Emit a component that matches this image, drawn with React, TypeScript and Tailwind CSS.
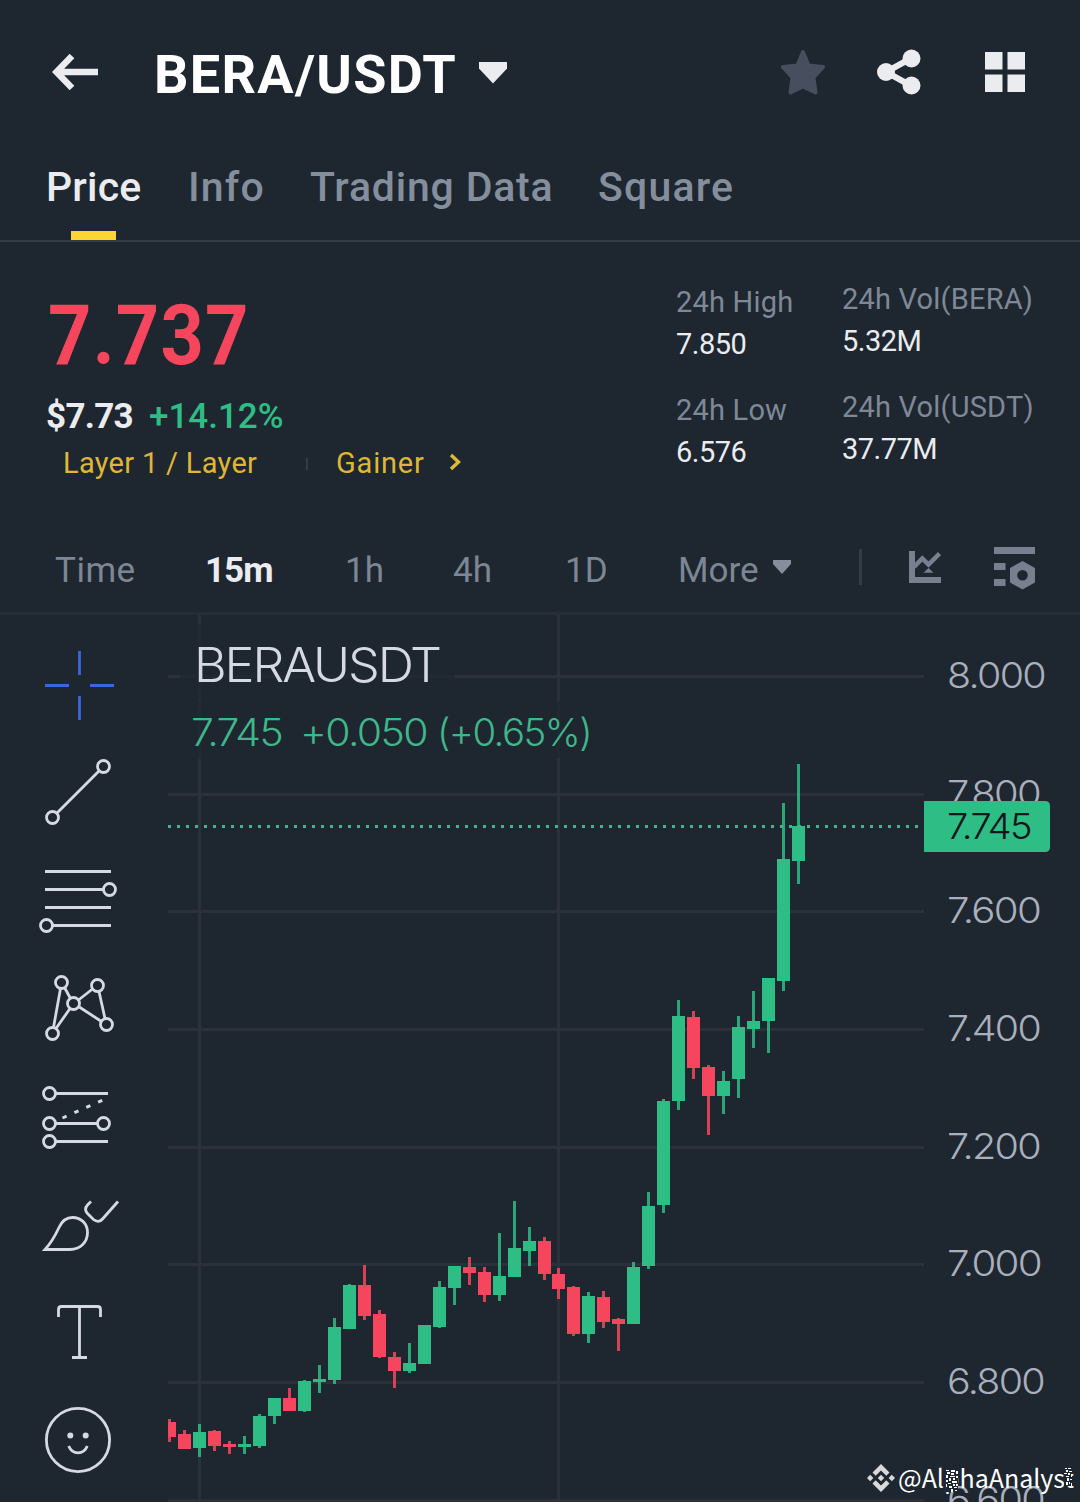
import type { ReactNode } from 'react'

type Candle = [x: number, high: number, top: number, bottom: number, low: number, up: 0 | 1]

const candles: Candle[] = [
  [169.5, 1419, 1422, 1437, 1442, 0],
  [184.5, 1430, 1434, 1449, 1449, 0],
  [199.5, 1424, 1432, 1448, 1457, 1],
  [214.5, 1430, 1431, 1446, 1451, 0],
  [229.5, 1441, 1444, 1447, 1454, 0],
  [244.5, 1436, 1444, 1447, 1454, 1],
  [259.5, 1414, 1416, 1446, 1448, 1],
  [274.5, 1398, 1398, 1416, 1424, 1],
  [289.5, 1388, 1398, 1411, 1411, 0],
  [304.5, 1380, 1381, 1411, 1412, 1],
  [319.5, 1365, 1379, 1382, 1393, 1],
  [334.5, 1318, 1327, 1380, 1384, 1],
  [349.5, 1284, 1285, 1329, 1329, 1],
  [364.5, 1265, 1285, 1316, 1320, 0],
  [379.5, 1310, 1314, 1357, 1358, 0],
  [394.5, 1352, 1357, 1371, 1388, 0],
  [409.5, 1343, 1363, 1371, 1373, 1],
  [424.5, 1325, 1325, 1364, 1364, 1],
  [439.5, 1281, 1287, 1327, 1328, 1],
  [454.5, 1266, 1266, 1288, 1305, 1],
  [469.5, 1257, 1267, 1273, 1285, 0],
  [484.5, 1267, 1272, 1295, 1302, 0],
  [499.5, 1233, 1276, 1295, 1301, 1],
  [514.5, 1201, 1248, 1277, 1277, 1],
  [529.5, 1227, 1241, 1251, 1266, 1],
  [544.5, 1237, 1241, 1274, 1280, 0],
  [558.5, 1268, 1274, 1289, 1299, 0],
  [573.5, 1286, 1287, 1334, 1336, 0],
  [588.5, 1292, 1296, 1334, 1343, 1],
  [603.5, 1291, 1297, 1322, 1328, 0],
  [618.5, 1318, 1319, 1324, 1351, 0],
  [633.5, 1262, 1267, 1324, 1324, 1],
  [648.5, 1192, 1206, 1266, 1269, 1],
  [663.5, 1099, 1101, 1205, 1213, 1],
  [678.5, 1000, 1016, 1101, 1110, 1],
  [693.5, 1011, 1017, 1068, 1079, 0],
  [708.5, 1065, 1067, 1096, 1135, 0],
  [723.5, 1071, 1081, 1096, 1114, 1],
  [738.5, 1016, 1027, 1079, 1098, 1],
  [753.5, 991, 1021, 1029, 1048, 1],
  [768.5, 978, 978, 1021, 1053, 1],
  [783.5, 803, 859, 981, 991, 1],
  [798.5, 764, 826, 861, 884, 1],
]

const levels = [
  { label: '8.000', y: 676.5, width: 98 },
  { label: '7.800', y: 794.5, width: 93 },
  { label: '7.600', y: 911.5, width: 93 },
  { label: '7.400', y: 1029.5, width: 93 },
  { label: '7.200', y: 1147.5, width: 93 },
  { label: '7.000', y: 1264.5, width: 94 },
  { label: '6.800', y: 1382.5, width: 97 },
  { label: '6.600', y: 1500.5, width: 97 },
]

const stats = [
  {
    className: 'w-[166px] pt-[39px]',
    items: [
      { label: '24h High', value: '7.850' },
      { label: '24h Low', value: '6.576' },
    ],
  },
  {
    className: 'w-[238px] pt-9',
    items: [
      { label: '24h Vol(BERA)', value: '5.32M' },
      { label: '24h Vol(USDT)', value: '37.77M' },
    ],
  },
]

const timeframes = [
  { label: 'Time', className: 'w-[150px] tracking-[0.5px]' },
  { label: '15m', className: 'w-[140px] font-bold tracking-[-1px] text-[#eaecef]' },
  { label: '1h', className: 'w-[108px]' },
  { label: '4h', className: 'w-[112px]' },
  { label: '1D', className: 'w-[113px]' },
]

function Header() {
  return (
    <header className="flex h-36 items-center pl-[52px] pr-[55px]">
      <svg className="h-9 w-[46px]" viewBox="0 0 46 36" fill="none" stroke="#eaecef" strokeWidth="6.5">
        <path d="M20 2 4.5 18 20 34M4 18h42" />
      </svg>
      <h1 className="ml-[56px] w-[325px] pt-[5px] text-[54px] font-bold leading-none tracking-[1.3px] text-white">BERA/USDT</h1>
      <svg className="mt-0.5 h-[22px] w-7" viewBox="0 0 28 22" fill="#eaecef">
        <path d="M0 0h28v6.500L14 21.500 0 6.500Z" />
      </svg>
      <div className="ml-auto flex items-center">
        <svg className="h-[46px] w-[46px]" viewBox="0 0 46 46" fill="#474f5e" stroke="#474f5e" strokeWidth="4" strokeLinejoin="round">
          <path d="M23 3 28.500 16.500 43 18 33.500 28.500 35.500 43.500 23 37.500 10.500 43.500 12.500 28.500 3 18 17.500 16.500Z" />
        </svg>
        <svg className="ml-[51px] h-[46px] w-[44px]" viewBox="0 0 44 46" fill="#eaecef">
          <path d="M34.500 9 9 23 34.500 37" fill="none" stroke="#eaecef" strokeWidth="6" />
          <circle cx="9" cy="23" r="9" />
          <circle cx="34.500" cy="9.500" r="9" />
          <circle cx="34.500" cy="36.500" r="9" />
        </svg>
        <svg className="ml-16 h-10 w-10" viewBox="0 0 40 40" fill="#eaecef">
          <path d="M0 0h17.500v17.500H0zM22.500 0H40v17.500H22.500zM0 22.500h17.500V40H0zM22.500 22.500H40V40H22.500z" />
        </svg>
      </div>
    </header>
  )
}

function Tabs() {
  return (
    <nav className="flex h-[98px] border-b-2 border-[#333b47] pl-[46px] text-[41px] font-medium text-[#848e9c]">
      <div className="flex w-[142px] flex-col text-[#eaecef]">
        <span className="h-[87px] leading-[87px] tracking-[0.2px]">Price</span>
        <span className="ml-[25px] h-[9px] w-[45px] bg-[#fcd535]" />
      </div>
      <span className="w-[122px] leading-[87px] tracking-[1.2px]">Info</span>
      <span className="w-[288px] leading-[87px] tracking-[0.8px]">Trading Data</span>
      <span className="leading-[87px] tracking-[1.2px]">Square</span>
    </nav>
  )
}

function Summary() {
  return (
    <section className="flex h-72 justify-between">
      <div className="pl-[46px] pt-[54px]">
        <div className="ml-0.5 h-20 origin-left scale-x-[0.9] text-[84px] font-bold leading-[80px] tracking-[1.4px] text-[#f6465d]">7.737</div>
        <div className="mt-[21px] flex h-10 text-[35px] font-bold leading-10 text-[#eaecef]">
          <span className="w-[103px] tracking-[-0.7px]">$7.73</span>
          <span className="font-medium text-[#2ebd85]">+14.12%</span>
        </div>
        <div className="mt-[7px] flex h-10 items-center pl-[17px] text-[29px] text-[#dfb637]">
          <span className="w-[243px] tracking-[0.3px]">Layer 1 / Layer</span>
          <span className="h-3 w-0.5 bg-[#353d49]" />
          <span className="ml-7 w-[113px] tracking-[0.8px]">Gainer</span>
          <svg className="mb-1 h-[18px] w-3" viewBox="0 0 12 18" fill="none" stroke="#dfb637" strokeWidth="3.500">
            <path d="M2 2 9.500 9 2 16" />
          </svg>
        </div>
      </div>
      <div className="flex text-[29px] leading-[42px]">
        {stats.map((col, i) => (
          <dl key={i} className={col.className}>
            {col.items.map((item) => (
              <div key={item.label} className="mb-6">
                <dt className="tracking-[0.2px] text-[#7f8896]">{item.label}</dt>
                <dd className="tracking-[-0.5px] text-[#eaecef]">{item.value}</dd>
              </div>
            ))}
          </dl>
        ))}
      </div>
    </section>
  )
}

function TimeframeBar() {
  return (
    <div className="flex h-[85px] items-center border-b-[3px] border-[#262d37] pl-[55px] text-[35px] text-[#7d8694]">
      {timeframes.map((t) => (
        <span key={t.label} className={`pt-px ${t.className}`}>{t.label}</span>
      ))}
      <span className="w-[95px] pt-px">More</span>
      <svg className="mb-2 h-[14px] w-[18px]" viewBox="0 0 18 14" fill="#848e9c">
        <path d="M0 0h18v4L9 14 0 4Z" />
      </svg>
      <span className="mb-2 ml-[68px] h-9 w-[3px] bg-[#333b47]" />
      <svg className="mb-2 ml-[47px] h-8 w-8" viewBox="0 0 32 32" fill="#76808f">
        <path d="M0 0h6v26h26v6H0z" />
        <path d="M5 16 13.300 7.500 19.500 13.500 30.500 2.500" fill="none" stroke="#76808f" strokeWidth="4.500" />
        <path d="m19.500 17 5 4.700h-10z" />
      </svg>
      <svg className="mb-1.5 ml-[53px] h-[43px] w-[41px]" viewBox="0 0 41 43" fill="#76808f">
        <path d="M0 0h41v7H0zM0 16h11.500v7H0zM0 32h11.500v7H0z" />
        <path fillRule="evenodd" d="M28.500 14 41 21v14.500L28.500 42.500 16 35.500V21ZM28.500 23a5.300 5.300 0 1 0 0 10.600 5.300 5.300 0 0 0 0-10.600Z" />
      </svg>
    </div>
  )
}

function Tool({ children, className = 'text-[#d5d9e2]' }: { children: ReactNode; className?: string }) {
  return (
    <button type="button" className={className}>
      <svg width="120" height="108" viewBox="0 0 120 108" fill="none" stroke="currentColor" strokeWidth="2.800">
        {children}
      </svg>
    </button>
  )
}

function Toolbar() {
  return (
    <aside className="flex w-[168px] flex-col pl-5 pt-4">
      <Tool className="text-[#3f66d8]">
        <path d="M59.500 20v24M59.500 65v24M25 54.500h24M70 54.500h24" />
      </Tool>
      <Tool>
        <path d="M79 32 37 74" />
        <circle cx="83.500" cy="27.500" r="6" />
        <circle cx="32.500" cy="78.500" r="6" />
      </Tool>
      <Tool>
        <path d="M25 24.500h66M25 42.500h58M25 60.500h66M33 78.500h58" />
        <circle cx="89.500" cy="42.500" r="6" />
        <circle cx="26.500" cy="78.500" r="6" />
      </Tool>
      <Tool>
        <path d="M40.500 33.500 33.500 72.500M44.500 32.500 50.500 43.500M50 53.500 36 73.500M58.500 45 72.500 34M58.500 51.500 81.500 66.500M79 36.500 85 63.500" />
        <circle cx="41.500" cy="27.500" r="6" />
        <circle cx="77.500" cy="30.500" r="6" />
        <circle cx="53.500" cy="48.500" r="6" />
        <circle cx="86.500" cy="69.500" r="6" />
        <circle cx="32.500" cy="78.500" r="6" />
      </Tool>
      <Tool>
        <path d="M36 30.500h52M36 60.500h41M36 78.500h52" />
        <path d="M42.500 55 84 36.500" strokeDasharray="4.500 8.500" strokeWidth="3" />
        <circle cx="29.500" cy="30.500" r="6" />
        <circle cx="29.500" cy="60.500" r="6" />
        <circle cx="83.500" cy="60.500" r="6" />
        <circle cx="29.500" cy="78.500" r="6" />
      </Tool>
      <Tool>
        <path d="M25 78.500C32 71 35.500 64 39 56.500 42 50 46 46.500 52.500 46.500 61.500 46.500 67.500 53 67.500 61.500 67.500 71.500 60 78.500 50 78.500Z" />
        <path d="M71 30.500 67.500 34C65 36.700 65 39.700 67.500 42.500L73.500 48.500C76.500 51 80 51 82.500 48L98 30.500" />
      </Tool>
      <Tool>
        <path d="M38.500 38v-7.500q0-3 3-3h36q3 0 3 3V38M59.500 27.500v51M52 78.500h15" />
      </Tool>
      <Tool>
        <circle cx="58" cy="53" r="31.600" />
        <circle cx="50.300" cy="48.500" r="3" fill="currentColor" stroke="none" />
        <circle cx="65.700" cy="48.500" r="3" fill="currentColor" stroke="none" />
        <path d="M48.700 59C50.500 63.500 54 65.800 58 65.800S65.500 63.500 67.300 59" />
      </Tool>
    </aside>
  )
}

function Chart() {
  return (
    <svg className="block" width="912" height="887" viewBox="168 615 912 887" fontFamily="Inter, sans-serif" fontWeight="300">
      <g stroke="#2b303b" strokeWidth="3">
        {levels.map((l) => (
          <path key={l.label} d={`M168 ${l.y}H924`} />
        ))}
        <path d="M199.500 615V1502M558.500 615V1502" />
      </g>
      <g fill="#1e2630" fillOpacity="0.7">
        <rect x="180" y="624" width="275" height="76" />
        <rect x="180" y="701" width="424" height="58" />
      </g>
      <text x="194" y="681.500" fontSize="48" fill="#d5d9e2" letterSpacing="-2" textLength="246" lengthAdjust="spacingAndGlyphs">BERAUSDT</text>
      <g fill="#3fb78a" fontSize="38" letterSpacing="-1.5">
        <text x="191" y="746" textLength="91" lengthAdjust="spacingAndGlyphs">7.745</text>
        <text x="300" y="746" textLength="127" lengthAdjust="spacingAndGlyphs">+0.050</text>
        <text x="437" y="746" textLength="154" lengthAdjust="spacingAndGlyphs">(+0.65%)</text>
      </g>

      {candles.map(([x, high, top, bottom, low, up]) => (
        <g key={x} fill={up ? '#2ebd85' : '#f6465d'}>
          <rect x={x - 1.5} y={high} width="3" height={low - high} fillOpacity="0.85" />
          <rect x={x - 6.5} y={top} width="13" height={bottom - top} />
        </g>
      ))}
      <path d="M168 826.500H920" stroke="#3fb78a" strokeWidth="3" strokeDasharray="3 6" />

      <g fill="#a9afbc" fontSize="35" letterSpacing="-1.5">
        {levels.map((l) => (
          <text key={l.label} x="947" y={l.y + 11.5} textLength={l.width} lengthAdjust="spacingAndGlyphs">{l.label}</text>
        ))}
      </g>
      <path d="M924 801h121q5 0 5 5v41q0 5-5 5H924Z" fill="#2ebd85" />
      <text x="947" y="839" fontSize="35" fill="#12161c" letterSpacing="-1.5" textLength="84" lengthAdjust="spacingAndGlyphs">7.745</text>
    </svg>
  )
}

function Watermark() {
  return (
    <div className="absolute bottom-1 left-[867px] flex h-10 items-center text-white">
      <svg className="h-7 w-7" viewBox="0 0 28 28" fill="#d9d9d9">
        <path d="m14 0 8.500 8.500-3.200 3.200L14 6.400l-5.300 5.300-3.200-3.200zM14 28l-8.500-8.500 3.200-3.200 5.300 5.300 5.300-5.300 3.200 3.200zM3.200 10.800 6.400 14l-3.200 3.200L0 14zM24.800 10.800 28 14l-3.200 3.200L21.600 14zM14 10.800l3.200 3.200-3.200 3.200-3.200-3.200z" />
      </svg>
      <span className="mb-[3px] ml-[3px] whitespace-nowrap font-['Noto_Sans_CJK_SC',sans-serif] text-[25px] leading-10">@AlphaAnalyst</span>
      <svg className="absolute left-[79px] top-[12px]" width="12" height="22" viewBox="0 0 12 22">
        <path fill="#1e2630" d="M0 0h12v22H0z" />
        <path fill="#fff" d="M0 0h3v1H0zM5 0h4v2H5zM10 1h2v3h-2zM1 2h3v2H1zM5 3h3v2H5zM0 5h2v3H0zM4 6h5v1H4zM10 6h2v2h-2zM3 8h2v3H3zM7 8h2v2H7zM0 10h2v2H0zM6 11h5v2H6zM2 13h3v1H2zM0 14h1v3H0zM7 14h2v2H7zM10 14h2v2h-2zM3 16h3v2H3zM8 17h3v1H8zM5 19h2v3H5zM9 20h2v1H9z" />
      </svg>
      <svg className="absolute left-[197px] top-2.5" width="8" height="18" viewBox="0 0 8 18">
        <path fill="#1e2630" d="M0 0h8v18H0z" />
        <path fill="#fff" d="M1 0h2v1H1zM4 0h3v1H4zM2 2h2v2H2zM5 3h3v1H5zM0 5h3v1H0zM4 5h2v2H4zM7 6h1v3H7zM2 8h3v1H2zM3 10h2v3H3zM6 11h2v1H6zM2 14h2v3H2zM5 14h1v2H5zM7 15h1v3H7z" />
      </svg>
    </div>
  )
}

export default function App() {
  return (
    <div className="relative h-[1502px] w-[1080px] overflow-hidden bg-[#1e2630] font-[Roboto,sans-serif]">
      <Header />
      <Tabs />
      <Summary />
      <TimeframeBar />
      <main className="flex h-[887px]">
        <Toolbar />
        <Chart />
      </main>
      <Watermark />
    </div>
  )
}
